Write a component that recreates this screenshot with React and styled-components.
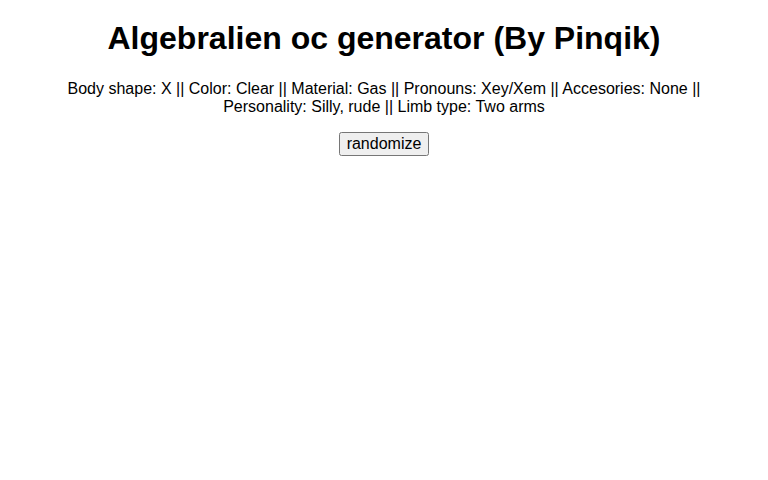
import React, { useState } from 'react';
import styled, { createGlobalStyle } from 'styled-components';

const GlobalStyle = createGlobalStyle`
  body {
    margin: 0;
    background: #ffffff;
    font-family: "Liberation Sans", Arial, sans-serif;
    color: #000000;
  }
`;

const Page = styled.div`
  text-align: center;
`;

const Title = styled.h1`
  font-size: 32px;
  font-weight: bold;
  margin: 19.5px 0 23.4px;
`;

const Traits = styled.p`
  font-size: 16px;
  margin: 16px 0;
`;

const RandomButton = styled.button`
  font-family: "Liberation Sans", Arial, sans-serif;
  font-size: 16px;
`;

const initial = [
  ['Body shape', 'X'],
  ['Color', 'Clear'],
  ['Material', 'Gas'],
  ['Pronouns', 'Xey/Xem'],
  ['Accesories', 'None'],
  ['Personality', 'Silly, rude'],
  ['Limb type', 'Two arms'],
];

const App = () => {
  const [traits] = useState(initial);

  const join = (list) => list.map(([k, v]) => `${k}: ${v}`).join(' || ');

  return (
    <Page>
      <GlobalStyle />
      <Title>Algebralien oc generator (By Pinqik)</Title>
      <Traits>
        {join(traits.slice(0, 5))} ||
        <br />
        {join(traits.slice(5))}
      </Traits>
      <RandomButton>randomize</RandomButton>
    </Page>
  );
};

export default App;
